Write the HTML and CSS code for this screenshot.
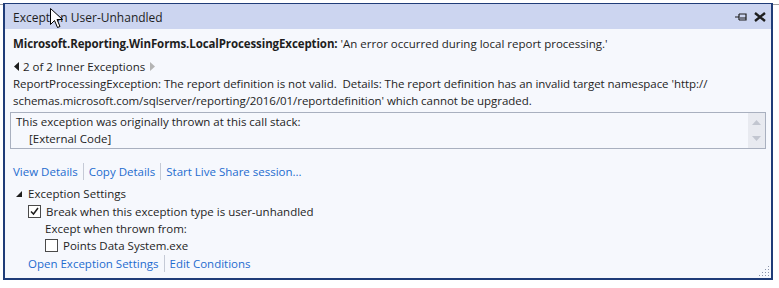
FILE: index.html
```html
<!DOCTYPE html>
<html lang='en'>

<head>
    <meta charset='UTF-8'>
    <title>Exception User-Unhandled</title>
    <link rel="stylesheet" href="styles.css">
</head>

<body>
    <div class='popup'>
        <div class='titlebar'>
            <span class='title'>Exception User-Unhandled</span>
            <span class='tools'>
                <svg class='pin' width='12' height='8' viewBox='0 0 12 8'>
                    <path d='M0 4h4M4 1v6M4 1h7v6H4M5 5h6' fill='none' stroke='#1e1e1e' stroke-width='1.2' />
                </svg>
                <svg class='close' width='12' height='10' viewBox='0 0 12 10'>
                    <path d='M1 1l10 8M11 1L1 9' stroke='#1e1e1e' stroke-width='2.4' />
                </svg>
            </span>
        </div>
        <div class='body'>
            <p class='headline'><b>Microsoft.Reporting.WinForms.LocalProcessingException:</b> 'An error occurred during
                local report processing.'</p>
            <p class='pager'>
                <svg width='6' height='9' viewBox='0 0 6 9'><path d='M5 0v9L0 4.5z' fill='#1e1e1e' /></svg>
                <span>2 of 2 Inner Exceptions</span>
                <svg width='6' height='9' viewBox='0 0 6 9'><path d='M1 0v9l5-4.5z' fill='#b4b4b4' /></svg>
            </p>
            <p class='message'>ReportProcessingException: The report definition is not valid.&nbsp; Details: The report
                definition has an invalid target namespace 'http://<br>schemas.microsoft.com/sqlserver/reporting/2016/01/reportdefinition'
                which cannot be upgraded.</p>
            <div class='stack'>
                <div class='stack-text'>
                    <div>This exception was originally thrown at this call stack:</div>
                    <div class='indent'>[External Code]</div>
                </div>
                <div class='scroll'>
                    <svg width='9' height='5' viewBox='0 0 9 5'><path d='M0 5h9L4.5 0z' fill='#c2c6d0' /></svg>
                    <svg width='9' height='5' viewBox='0 0 9 5'><path d='M0 0h9L4.5 5z' fill='#c2c6d0' /></svg>
                </div>
            </div>
            <div class='links'>
                <a>View Details</a><i></i><a>Copy Details</a><i></i><a>Start Live Share session...</a>
            </div>
            <div class='settings'>
                <div class='row'>
                    <svg class='expander' width='6' height='6' viewBox='0 0 6 6'><path d='M6 0v6H0z' fill='#1e1e1e' /></svg>
                    <span>Exception Settings</span>
                </div>
                <div class='row sub'>
                    <span class='check'>
                        <svg width='9' height='9' viewBox='0 0 9 9'><path d='M1 4.5l2.5 2.5L8 1' fill='none' stroke='#1e1e1e' stroke-width='1.5' /></svg>
                    </span>
                    <span>Break when this exception type is user-unhandled</span>
                </div>
                <div class='row subsub'>Except when thrown from:</div>
                <div class='row subsub'>
                    <span class='check'></span>
                    <span>Points Data System.exe</span>
                </div>
                <div class='links sub-links'>
                    <a>Open Exception Settings</a><i></i><a>Edit Conditions</a>
                </div>
            </div>
            <svg class='grip' width='11' height='11' viewBox='0 0 11 11'>
                <path d='M9 0h1v1H9zM9 3h1v1H9zM6 3h1v1H6zM9 6h1v1H9zM6 6h1v1H6zM3 6h1v1H3zM9 9h1v1H9zM6 9h1v1H6zM3 9h1v1H3zM0 9h1v1H0z' fill='#8a94aa' />
            </svg>
        </div>
    </div>
    <svg class='cursor' width='13' height='21' viewBox='0 0 13 21'>
        <path d='M0.5 0.5v16l4-4 3 7 2.5-1-3-7h5.5z' fill='#fff' stroke='#000' stroke-width='1' />
    </svg>
</body>

</html>
```
FILE: styles.css
```css
* {
    padding: 0;
    margin: 0;
}

body {
    width: 779px;
    height: 288px;
    background: #fff linear-gradient(#a0a0a0, #a0a0a0) no-repeat 0 4px / 100% 1px;
    font-family: 'Open Sans', 'Noto Sans', sans-serif;
    font-size: 11.5px;
    color: #1e1e1e;
}

.popup {
    margin: 3px 0 0 3px;
    width: 766px;
    height: 274px;
    border: #1f3c78 solid 2px;
    border-top-width: 1px;
    background: #f6f8fd;
    display: flex;
    flex-direction: column;
    position: relative;
}

.titlebar {
    height: 25px;
    background: #ccd5f0;
    display: flex;
    align-items: center;
    justify-content: space-between;
    padding: 0 5px 0 8px;
}

.title {
    font-size: 12px;
    color: #1e1e1e;
    margin-top: 1px;
}

.tools {
    display: flex;
    align-items: center;
    gap: 7px;
}

.body {
    flex: 1;
    padding: 0 5px 0 8px;
    line-height: 17px;
    position: relative;
}

.headline {
    margin-top: 6px;
}

.headline b {
    font-weight: 700;
    letter-spacing: -0.1px;
}

.pager {
    margin-top: 6px;
    display: flex;
    align-items: center;
    gap: 3px;
}

.pager svg {
    margin-left: 1px;
}

.message {
    letter-spacing: -0.05px;
}

.stack {
    margin: 3px 0 0 -3px;
    height: 35px;
    border: #a9b0bf solid 1px;
    display: flex;
}

.stack-text {
    flex: 1;
    padding: 0 5px;
}

.indent {
    padding-left: 13px;
}

.scroll {
    width: 17px;
    background: #e8eaf0;
    display: flex;
    flex-direction: column;
    align-items: center;
    justify-content: space-between;
    padding: 7px 0;
}

.links {
    margin-top: 14px;
    display: flex;
    align-items: center;
    color: #1e6ccf;
}

.links i {
    width: 1px;
    height: 17px;
    background: #c5cad6;
    margin: 0 5px;
}

.settings {
    margin-top: 4px;
}

.row {
    display: flex;
    align-items: center;
    height: 18px;
}

.expander {
    margin: 1px 6px 0 3px;
}

.sub {
    padding-left: 15px;
}

.subsub {
    padding-left: 32px;
    height: 17px;
}

.check {
    width: 11px;
    height: 11px;
    border: #4a4a4a solid 1px;
    background: #fff;
    margin-right: 5px;
    display: flex;
    align-items: center;
    justify-content: center;
}

.sub-links {
    margin: 1px 0 0 15px;
}

.grip {
    position: absolute;
    right: 1px;
    bottom: 1px;
}

.cursor {
    position: absolute;
    left: 50px;
    top: 8px;
}
```
